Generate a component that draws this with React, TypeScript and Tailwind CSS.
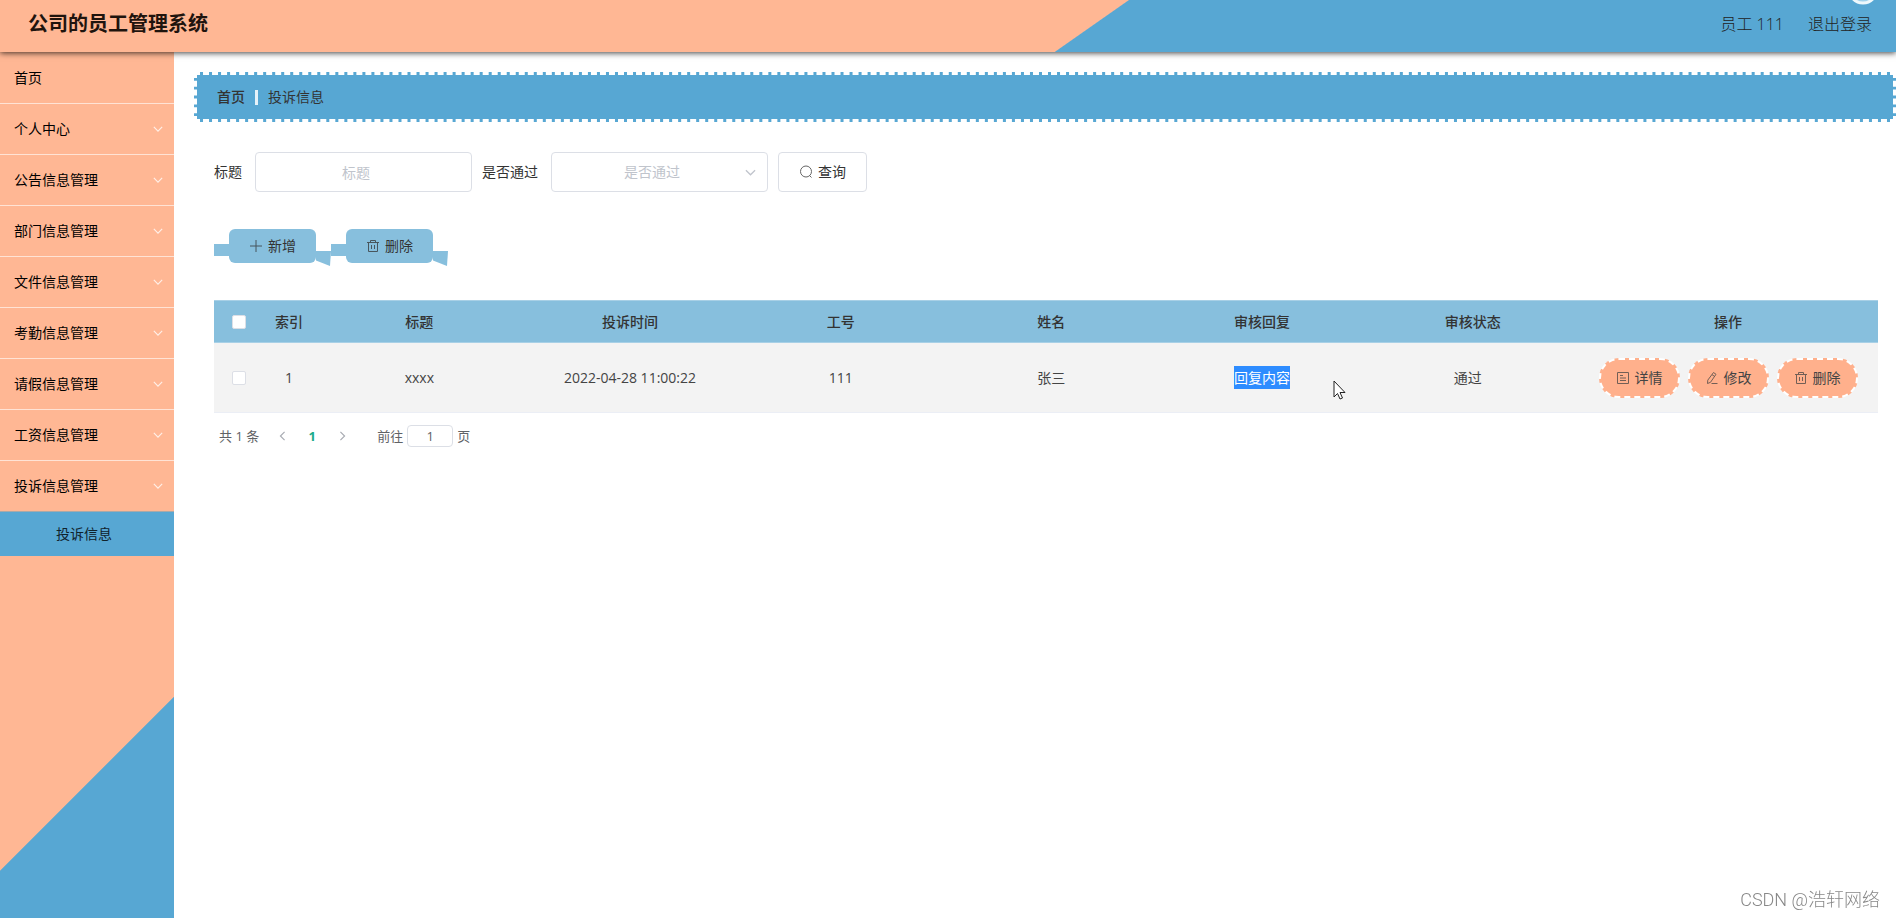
import { useState } from 'react';

const menus = [
    '个人中心',
    '公告信息管理',
    '部门信息管理',
    '文件信息管理',
    '考勤信息管理',
    '请假信息管理',
    '工资信息管理',
    '投诉信息管理',
];

const columns = ['标题', '投诉时间', '工号', '姓名', '审核回复', '审核状态'];

function Chevron({ className, d = 'M1 1l5 5 5-5', box = '0 0 12 7' }: { className: string; d?: string; box?: string }) {
    return (
        <svg className={className} viewBox={box} fill="none" stroke="currentColor" strokeWidth="1.4" aria-hidden="true">
            <path d={d} />
        </svg>
    );
}

function TrashIcon() {
    return (
        <svg className="w-[14px] h-[14px] opacity-75" viewBox="0 0 14 14" fill="none" stroke="currentColor" aria-hidden="true">
            <path d="M1 3.5h12M2.5 3.5v9h9v-9M4.5 3.5v-2h5v2M5.5 6v4M8.5 6v4" />
        </svg>
    );
}

function DocIcon() {
    return (
        <svg className="w-[14px] h-[14px] opacity-75" viewBox="0 0 14 14" fill="none" stroke="currentColor" aria-hidden="true">
            <path d="M1.5 1.5h11v11h-11zM4 4.5h3M4 7h6M4 9.5h6" />
        </svg>
    );
}

function EditIcon() {
    return (
        <svg className="w-[14px] h-[14px] opacity-75" viewBox="0 0 14 14" fill="none" stroke="currentColor" aria-hidden="true">
            <path d="M8.5 1.5l2.5 1.8-5.5 8-3 1.2.3-3.4zM7 3.6l2.5 1.8M6.5 12.5h6" />
        </svg>
    );
}

function RibbonButton({ icon, text }: { icon: React.ReactNode; text: string }) {
    return (
        <div className="flex items-start text-[#87bfdd]">
            <span className="w-[15px] h-3 mt-[15px] bg-[#87bfdd]" />
            <button className="h-[34px] w-[87px] flex items-center justify-center gap-[5px] rounded-md bg-[#87bfdd] text-[#333333]">
                {icon}
                {text}
            </button>
            <svg className="w-[15px] h-[15px] mt-[22px]" viewBox="0 0 15 15" fill="currentColor" aria-hidden="true">
                <path d="M0 0h15l-1 15L0 9.500z" />
            </svg>
        </div>
    );
}

function RowButton({ icon, text }: { icon: React.ReactNode; text: string }) {
    return (
        <button className="h-10 w-[81px] flex items-center justify-center gap-[5px] rounded-[20px] border-2 border-dashed border-white bg-[#ffb08c] text-[#444444]">
            {icon}
            {text}
        </button>
    );
}

export default function App() {
    const [title, setTitle] = useState('');
    const [passed, setPassed] = useState('');
    const [page, setPage] = useState('1');

    return (
        <div className="min-h-screen flex flex-col bg-white text-sm text-[#333333] font-['Open_Sans','Noto_Sans_CJK_SC',sans-serif]">
            <header className="relative z-10 h-[52px] px-6 pb-[5px] flex items-center justify-between shadow-[0_1px_6px_rgba(0,0,0,0.75)] bg-[linear-gradient(145deg,#ffb794_calc(50%+82px),#57a7d3_calc(50%+83px))]">
                <h1 className="pl-1 text-xl leading-7 font-bold text-[#1f140e]">公司的员工管理系统</h1>
                <div className="flex gap-6 text-base leading-6 font-light text-[#222222]">
                    <span>员工 111</span>
                    <a href="#logout">退出登录</a>
                </div>
                <svg className="absolute top-0 right-[17px] w-8 h-[5px]" viewBox="0 0 32 5" aria-hidden="true">
                    <circle cx="16" cy="-11" r="14" fill="#a3d3ec" stroke="#eef8fc" strokeWidth="3" />
                </svg>
            </header>

            <div className="flex-1 flex">
                <nav className="w-[174px] shrink-0 text-black bg-[linear-gradient(135deg,#ffb794_calc(100%-157px),#57a7d3_calc(100%-156px))]">
                    <a href="#home" className="h-[52px] px-[14px] flex items-center border-b border-[#ffe3d5]">
                        首页
                    </a>
                    {menus.map(m => (
                        <button
                            key={m}
                            className="w-full h-[51px] pl-[14px] pr-[11px] flex items-center justify-between border-b border-[#ffe3d5] last-of-type:border-[#a9a9a9]"
                        >
                            {m}
                            <Chevron className="w-[10px] h-[6px] text-[#fff0e8]" />
                        </button>
                    ))}
                    <a href="#complaint" className="h-11 pl-14 pb-px flex items-center bg-[#57a7d3] text-[#10222c]">
                        投诉信息
                    </a>
                </nav>

                <main className="flex-1 min-w-0 pt-5 pl-5">
                    <div className="h-[50px] pl-5 flex items-center gap-[10px] border-[3px] border-dashed border-white bg-[#57a7d3]">
                        <a href="#home" className="font-medium">首页</a>
                        <span className="w-[3px] h-[15px] bg-[#e6f2f9]" />
                        <span>投诉信息</span>
                    </div>

                    <div className="pl-5 pr-[18px] pt-[30px]">
                        <form className="flex items-center gap-[10px]" onSubmit={e => e.preventDefault()}>
                            <div className="flex items-center gap-[13px]">
                                <label htmlFor="title">标题</label>
                                <input
                                    id="title"
                                    className="w-[217px] h-10 pl-[15px] pr-[30px] rounded border border-[#dcdfe6] text-center placeholder:text-[#c0c4cc] outline-none"
                                    placeholder="标题"
                                    value={title}
                                    onChange={e => setTitle(e.target.value)}
                                />
                            </div>
                            <div className="flex items-center gap-[13px]">
                                <label htmlFor="passed">是否通过</label>
                                <div className="relative">
                                    <select
                                        id="passed"
                                        className="w-[217px] h-10 pl-[15px] pr-[30px] appearance-none rounded border border-[#dcdfe6] text-center [text-align-last:center] text-[#c0c4cc] outline-none"
                                        value={passed}
                                        onChange={e => setPassed(e.target.value)}
                                    >
                                        <option value="">是否通过</option>
                                        <option value="是">通过</option>
                                        <option value="否">未通过</option>
                                    </select>
                                    <Chevron className="absolute right-3 top-[17px] w-[11px] h-[7px] text-[#c0c4cc] pointer-events-none" />
                                </div>
                            </div>
                            <button className="w-[89px] h-10 flex items-center justify-center gap-[5px] rounded border border-[#dcdfe6]">
                                <svg className="w-[14px] h-[14px] opacity-75" viewBox="0 0 14 14" fill="none" stroke="currentColor" aria-hidden="true">
                                    <circle cx="7" cy="6.500" r="5.500" />
                                    <path d="M10.500 10.500l2 2" />
                                </svg>
                                查询
                            </button>
                        </form>

                        <div className="mt-[37px] flex">
                            <RibbonButton
                                text="新增"
                                icon={
                                    <svg className="w-[14px] h-[14px] opacity-75" viewBox="0 0 14 14" stroke="currentColor" aria-hidden="true">
                                        <path d="M7 1v12M1 7h12" />
                                    </svg>
                                }
                            />
                            <RibbonButton text="删除" icon={<TrashIcon />} />
                        </div>

                        <table className="mt-[34px] w-full table-fixed text-center">
                            <thead>
                                <tr className="h-[42px] bg-[#87bfdd] border-y border-[#a8d0e6]">
                                    <th className="w-[50px]">
                                        <input type="checkbox" aria-label="全选" className="block mx-auto w-[14px] h-[14px] appearance-none rounded-xs border border-[#dcdfe6] bg-white" />
                                    </th>
                                    <th className="w-[50px] font-medium">索引</th>
                                    {columns.map(c => (
                                        <th key={c} className="font-medium">{c}</th>
                                    ))}
                                    <th className="w-[300px] font-medium">操作</th>
                                </tr>
                            </thead>
                            <tbody>
                                <tr className="h-[70px] bg-[#f3f3f3] border-b border-[#ebeef5] text-[#444444]">
                                    <td>
                                        <input type="checkbox" aria-label="选择" className="block mx-auto w-[14px] h-[14px] appearance-none rounded-xs border border-[#dcdfe6] bg-white" />
                                    </td>
                                    <td>1</td>
                                    <td>xxxx</td>
                                    <td>2022-04-28 11:00:22</td>
                                    <td>111</td>
                                    <td>张三</td>
                                    <td className="relative">
                                        <span className="inline-block h-[23px] leading-[23px] bg-[#2d8cff] text-white">回复内容</span>
                                        <svg className="absolute left-44 top-[37px] w-[13px] h-5" viewBox="0 0 13 20" fill="#ffffff" stroke="#222222" aria-hidden="true">
                                            <path d="M1 1v16l3.500-3.500L7 19l2.500-1-2.500-5.500h5z" />
                                        </svg>
                                    </td>
                                    <td className="pr-[10px]">通过</td>
                                    <td>
                                        <div className="flex justify-center gap-2">
                                            <RowButton text="详情" icon={<DocIcon />} />
                                            <RowButton text="修改" icon={<EditIcon />} />
                                            <RowButton text="删除" icon={<TrashIcon />} />
                                        </div>
                                    </td>
                                </tr>
                            </tbody>
                        </table>

                        <div className="mt-3 pl-[5px] h-[22px] flex items-center text-[13px] text-[#606266]">
                            <span>共 1 条</span>
                            <button aria-label="上一页" className="w-[30px] ml-2 flex justify-center text-[#a8abb2]">
                                <Chevron className="w-[7px] h-[10px]" box="0 0 7 12" d="M6 1L1 6l5 5" />
                            </button>
                            <button className="w-[30px] font-bold text-[#1aab8a]">1</button>
                            <button aria-label="下一页" className="w-[30px] flex justify-center text-[#a8abb2]">
                                <Chevron className="w-[7px] h-[10px]" box="0 0 7 12" d="M1 1l5 5-5 5" />
                            </button>
                            <label htmlFor="page" className="ml-5">前往</label>
                            <input
                                id="page"
                                className="w-[46px] h-[22px] mx-1 rounded border border-[#dcdfe6] text-center outline-none"
                                value={page}
                                onChange={e => setPage(e.target.value)}
                            />
                            <span>页</span>
                        </div>
                    </div>
                </main>
            </div>

            <div className="fixed right-4 bottom-[6px] text-lg leading-6 text-[#888888] font-['Roboto','Noto_Sans_CJK_SC',sans-serif] font-light">
                CSDN @浩轩网络
            </div>
        </div>
    );
}
